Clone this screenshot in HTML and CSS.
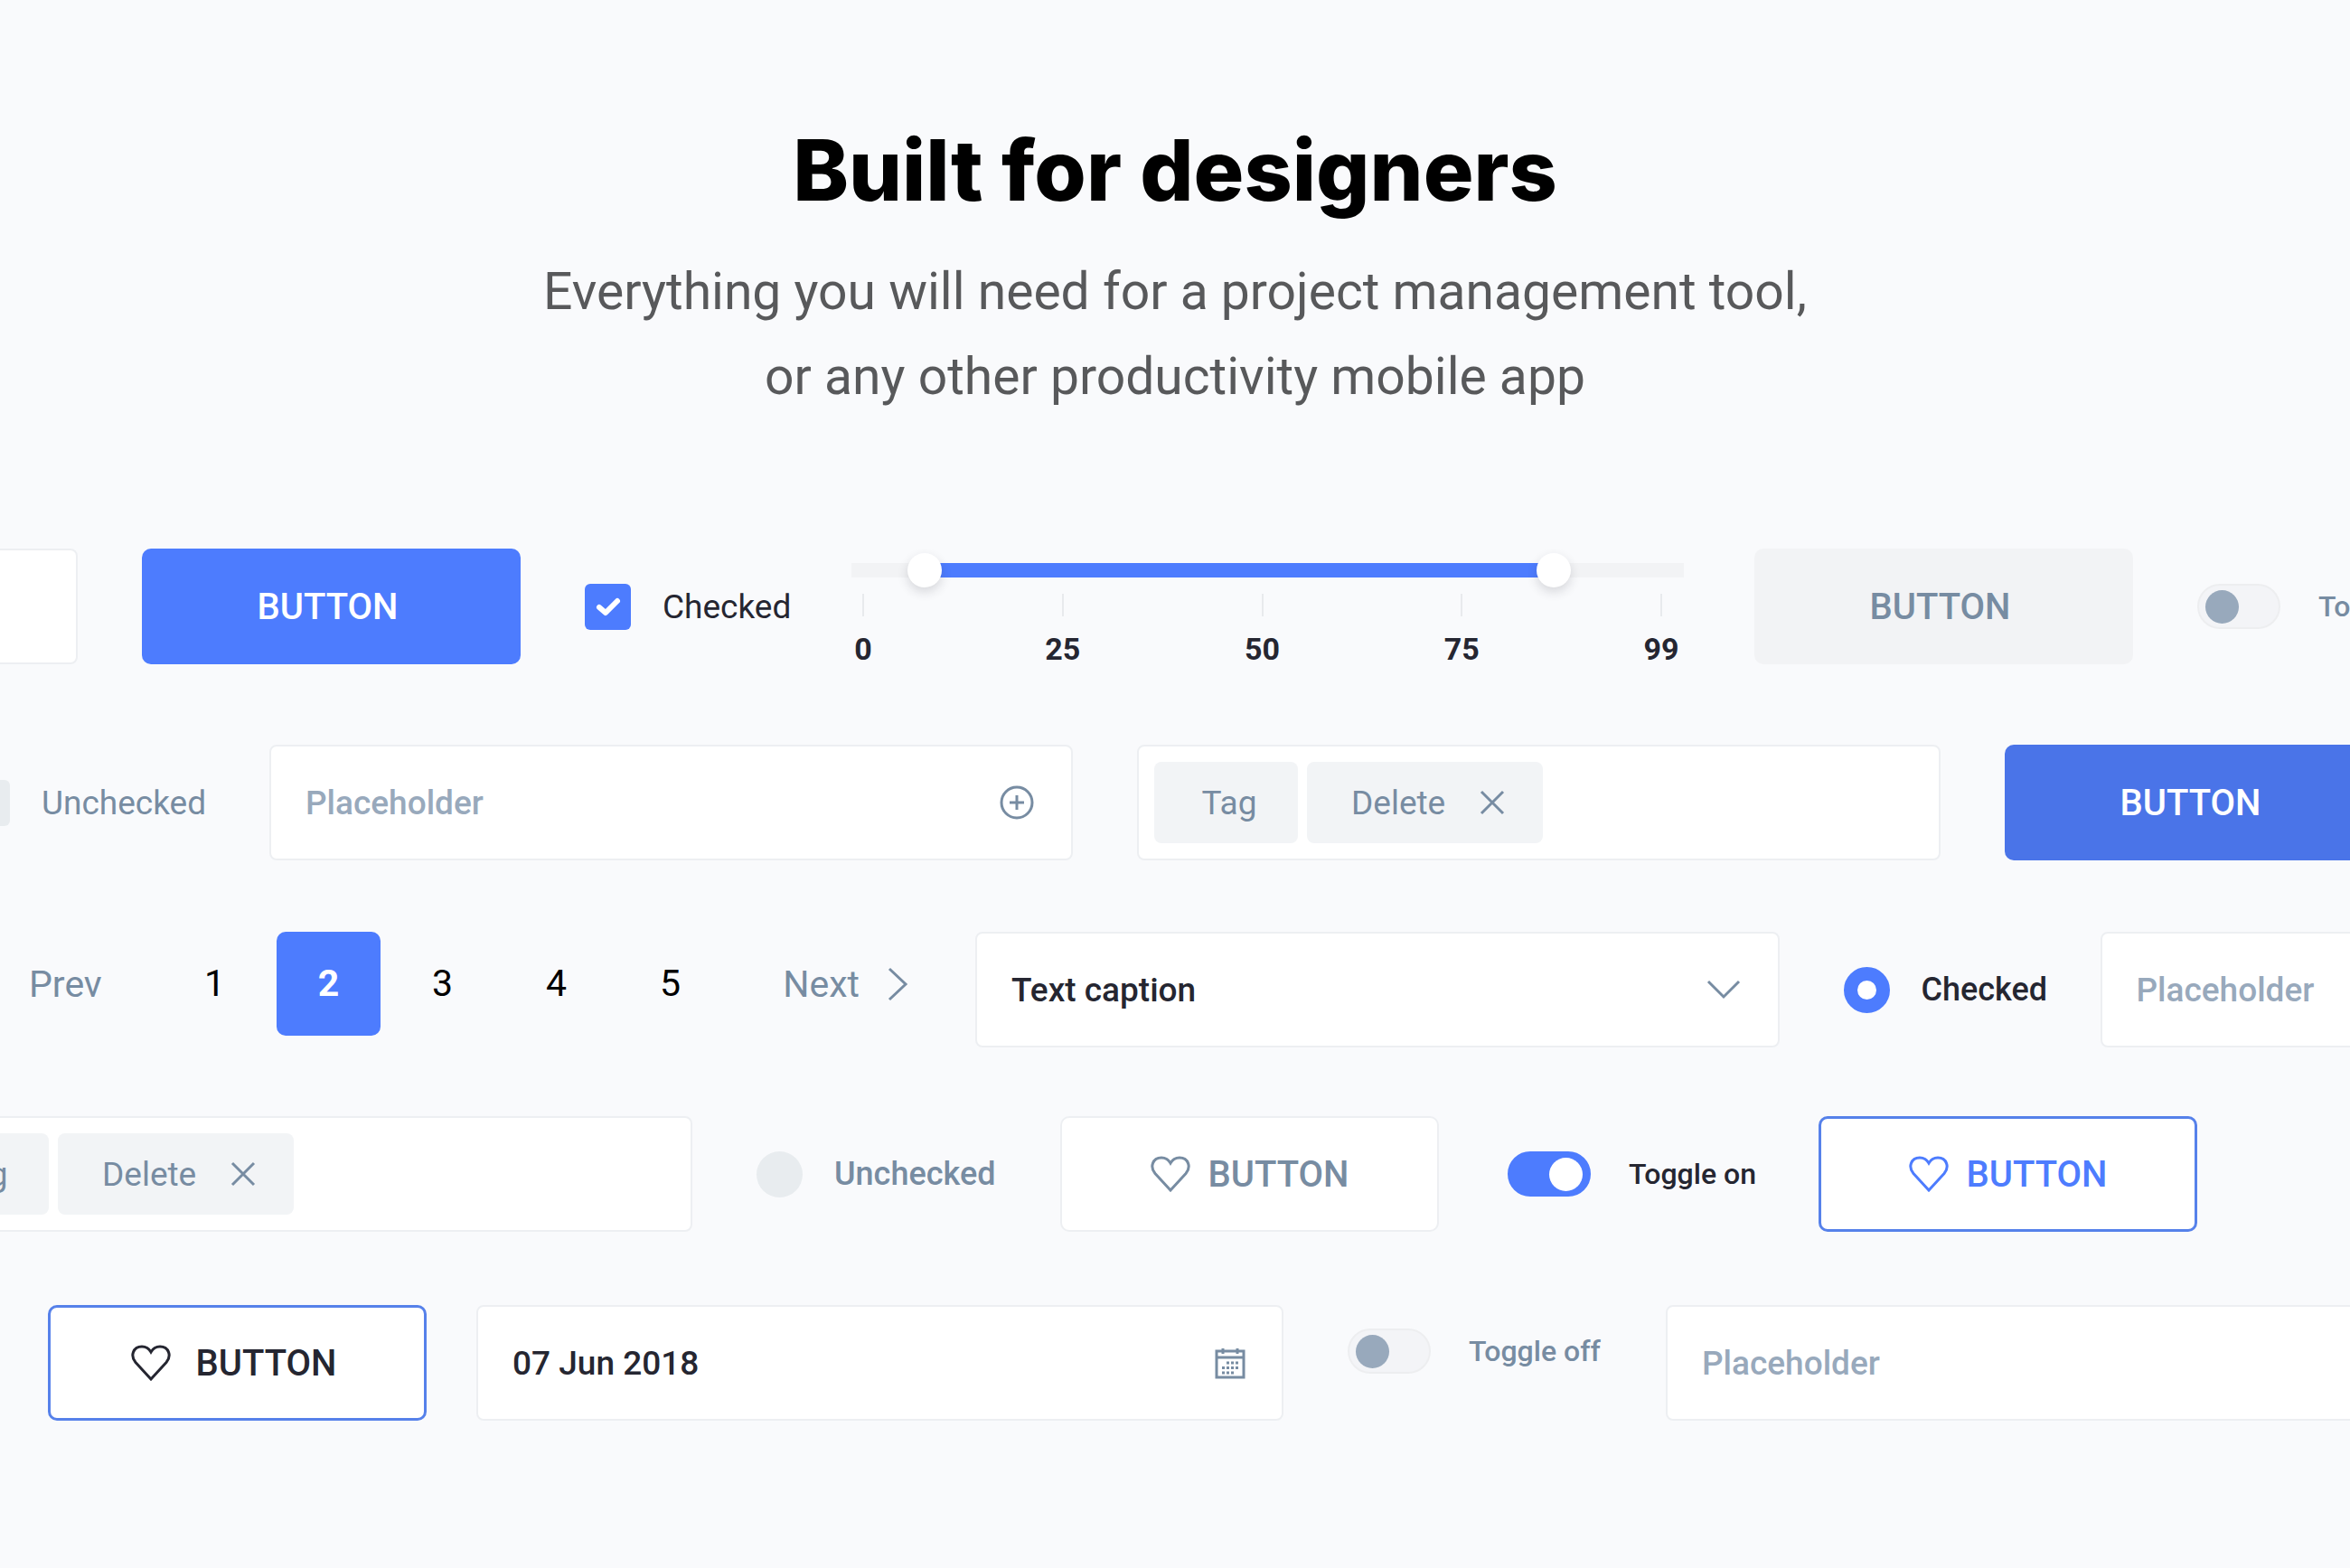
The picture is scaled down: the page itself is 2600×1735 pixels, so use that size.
FILE: index.html
```html
<!DOCTYPE html>
<html lang="en">
<head>
  <meta charset="UTF-8" />
  <meta name="viewport" content="width=device-width, initial-scale=1" />
  <title>Built for designers</title>
  <link rel="stylesheet" href="styles.css">
</head>
<body>
  <!-- Shared icons -->
  <svg class="sprite" aria-hidden="true">
    <symbol id="icon-heart" viewBox="0 0 44 40">
      <path d="M22 38 L5 19.500 C-1 12.500 2 2 12 2 C17 2 20 4.500 22 8 C24 4.500 27 2 32 2 C42 2 45 12.500 39 19.500 Z" />
    </symbol>
    <symbol id="icon-close" viewBox="0 0 28 28">
      <path d="M2 2 L26 26 M26 2 L2 26" />
    </symbol>
    <symbol id="icon-plus" viewBox="0 0 40 40">
      <circle cx="20" cy="20" r="17" />
      <path d="M20 12 V28 M12 20 H28" />
    </symbol>
    <symbol id="icon-right" viewBox="0 0 24 40">
      <path d="M3 3 L21 20 L3 37" />
    </symbol>
    <symbol id="icon-left" viewBox="0 0 24 40">
      <path d="M21 3 L3 20 L21 37" />
    </symbol>
    <symbol id="icon-down" viewBox="0 0 40 24">
      <path d="M3 3 L20 20 L37 3" />
    </symbol>
    <symbol id="icon-calendar" viewBox="0 0 34 36">
      <path d="M2 5 H32 V34 H2 Z M2 12 H32 M9 2 V8 M25 2 V8" />
      <path class="days" d="M13 18 H28 M8 23.500 H28 M8 29 H23" />
    </symbol>
  </svg>

  <header class="intro">
    <h1>Built for designers</h1>
    <p>Everything you will need for a project management tool,<br>or any other productivity mobile app</p>
  </header>

  <main class="showcase">
    <!-- Primary button, checkbox, range -->
    <section class="row row-range">
      <div class="field"><input type="text" aria-label="Empty field"></div>
      <button type="button" class="btn btn-primary">BUTTON</button>
      <label class="choice"><input type="checkbox" checked>Checked</label>
      <div class="slider">
        <div class="slider-track">
          <div class="slider-fill" style="left: 9%; right: 16%"></div>
          <input type="range" min="0" max="99" value="7" aria-label="Minimum">
          <input type="range" min="0" max="99" value="85" aria-label="Maximum">
        </div>
        <ol class="slider-scale">
          <li>0</li>
          <li>25</li>
          <li>50</li>
          <li>75</li>
          <li>99</li>
        </ol>
      </div>
      <button type="button" class="btn btn-muted">BUTTON</button>
      <label class="switch"><input type="checkbox" role="switch">Toggle off</label>
    </section>

    <!-- Inputs with icon and tags -->
    <section class="row row-inputs">
      <label class="choice"><input type="checkbox">Unchecked</label>
      <div class="field">
        <input type="text" placeholder="Placeholder" aria-label="Add item">
        <svg class="icon icon-plus"><use href="#icon-plus" /></svg>
      </div>
      <div class="field field-tags">
        <span class="tag">Tag</span>
        <button type="button" class="tag">Delete<svg class="icon icon-close"><use href="#icon-close" /></svg></button>
        <input type="text" aria-label="Add tag">
      </div>
      <button type="button" class="btn btn-pressed">BUTTON</button>
    </section>

    <!-- Pagination and select -->
    <section class="row row-pages">
      <nav class="pagination" aria-label="Pagination">
        <a href="#prev" class="step"><svg class="icon icon-step"><use href="#icon-left" /></svg>Prev</a>
        <div class="pages">
          <a href="#1">1</a>
          <a href="#2" class="current" aria-current="page">2</a>
          <a href="#3">3</a>
          <a href="#4">4</a>
          <a href="#5">5</a>
        </div>
        <a href="#next" class="step">Next<svg class="icon icon-step"><use href="#icon-right" /></svg></a>
      </nav>
      <div class="field">
        <select aria-label="Caption">
          <option>Text caption</option>
        </select>
        <svg class="icon icon-down"><use href="#icon-down" /></svg>
      </div>
      <label class="choice strong"><input type="radio" name="round" checked>Checked</label>
      <div class="field"><input type="text" placeholder="Placeholder" aria-label="Text field"></div>
    </section>

    <!-- Tags, outline buttons, toggle -->
    <section class="row row-outline">
      <div class="field field-tags">
        <span class="tag">Tag</span>
        <button type="button" class="tag">Delete<svg class="icon icon-close"><use href="#icon-close" /></svg></button>
        <input type="text" aria-label="Add tag">
      </div>
      <label class="choice strong"><input type="radio" name="other">Unchecked</label>
      <button type="button" class="btn btn-plain"><svg class="icon icon-heart"><use href="#icon-heart" /></svg>BUTTON</button>
      <label class="switch"><input type="checkbox" role="switch" checked>Toggle on</label>
      <button type="button" class="btn btn-outline"><svg class="icon icon-heart"><use href="#icon-heart" /></svg>BUTTON</button>
    </section>

    <!-- Date field -->
    <section class="row row-date">
      <button type="button" class="btn btn-outline btn-dark"><svg class="icon icon-heart"><use href="#icon-heart" /></svg>BUTTON</button>
      <div class="field">
        <input type="text" value="07 Jun 2018" aria-label="Date">
        <svg class="icon icon-calendar"><use href="#icon-calendar" /></svg>
      </div>
      <label class="switch"><input type="checkbox" role="switch">Toggle off</label>
      <div class="field"><input type="text" placeholder="Placeholder" aria-label="Notes"></div>
    </section>
  </main>
</body>
</html>
```
FILE: styles.css
```css
/* Reset and base */
* {
  box-sizing: border-box;
}

:root {
  --blue: #4d7cfe;
  --dark: #252631;
  --slate: #778ca2;
  --light-slate: #98a9bc;
  --line: #edeff2;
  --gray: #f2f3f5;
}

body {
  margin: 0;
  background: #f9fafc;
  color: var(--dark);
  font-family: Roboto, sans-serif;
  font-size: 37px;
  overflow-x: hidden;
}

button,
input,
select {
  margin: 0;
  font: inherit;
  color: inherit;
}

button {
  cursor: pointer;
}

a {
  color: inherit;
  text-decoration: none;
}

/* Icons */
.sprite {
  display: none;
}

.icon {
  flex: none;
  fill: none;
  stroke: currentColor;
  stroke-width: 3px;
}

.icon-heart {
  width: 44px;
  height: 40px;
}

.icon-close {
  width: 28px;
  height: 28px;
}

.icon-plus {
  width: 40px;
  height: 40px;
}

.icon-step {
  width: 24px;
  height: 40px;
}

.icon-down {
  width: 40px;
  height: 24px;
}

.icon-calendar {
  width: 34px;
  height: 36px;
}

.days {
  stroke-dasharray: 3 2;
}

/* Heading */
.intro {
  padding: 128px 40px 0;
  text-align: center;
}

h1 {
  margin: 0;
  color: #000;
  font-family: Inter, sans-serif;
  font-size: 93px;
  font-weight: 800;
  line-height: 120px;
}

.intro p {
  margin: 28px 0 0;
  color: #58595b;
  font-size: 57px;
  line-height: 94px;
}

/* Component rows, they run past both sides of the window */
.showcase {
  padding: 143px 0 120px;
  overflow: hidden;
}

.row {
  display: grid;
  column-gap: 71px;
  align-items: center;
  min-height: 128px;
}

.row-range {
  grid-template-columns: 1fr 419px 224px 928px 419px 279px;
  margin: 0 -110px 0 -803px;
}

.row-inputs {
  grid-template-columns: 267px 1fr 1fr 419px;
  margin: 89px -37px 0 -40px;
}

.row-pages {
  grid-template-columns: 1030px 1fr 213px 1fr;
  margin: 79px -613px 0 -22px;
}

.row-outline {
  grid-template-columns: 1fr 265px 424px 273px 419px;
  margin: 76px 169px 0 -124px;
}

.row-date {
  grid-template-columns: 403px 1fr 281px 1fr;
  margin: 81px -136px 0 53px;
}

/* Buttons */
.btn {
  display: flex;
  align-items: center;
  justify-content: center;
  gap: 20px;
  width: 419px;
  height: 128px;
  padding: 0 8px 0 0;
  border: 0;
  border-radius: 10px;
  font-size: 40px;
  font-weight: 500;
}

.btn-primary {
  background: var(--blue);
  color: #fff;
}

.btn-pressed {
  background: #4a74e8;
  color: #fff;
}

.btn-muted {
  background: var(--gray);
  color: var(--slate);
}

.btn-plain {
  padding: 0;
  border: 2px solid var(--line);
  background: #fff;
  color: var(--slate);
}

.btn-outline {
  padding: 0;
  border: 3px solid #5681ea;
  background: #fff;
  color: var(--blue);
}

.btn-dark {
  gap: 28px;
  padding: 0 8px 0 0;
  color: var(--dark);
}

/* Fields */
.field {
  display: flex;
  align-items: center;
  min-width: 0;
  height: 128px;
  padding: 0 40px 0 38px;
  border: 2px solid var(--line);
  border-radius: 8px;
  background: #fff;
  color: var(--slate);
}

.field input,
.field select {
  flex: 1;
  min-width: 0;
  height: 100%;
  padding: 0;
  border: 0;
  outline: none;
  background: transparent;
  color: var(--dark);
  font-weight: 500;
  appearance: none;
}

.field input::placeholder {
  color: var(--light-slate);
  opacity: 1;
}

.field-tags {
  gap: 10px;
  padding: 0 17px;
}

.tag {
  display: flex;
  flex: none;
  align-items: center;
  justify-content: center;
  gap: 38px;
  min-width: 159px;
  height: 90px;
  padding: 0 42px 0 49px;
  border: 0;
  border-radius: 8px;
  background: #f2f4f6;
  color: var(--slate);
}

/* Checkbox and radio */
.choice {
  display: flex;
  align-items: center;
  gap: 35px;
  white-space: nowrap;
}

.choice input {
  flex: none;
  width: 51px;
  height: 51px;
  border-radius: 6px;
  background: #e8ecef;
  appearance: none;
}

.choice input:checked {
  background: var(--blue) url("data:image/svg+xml,%3Csvg xmlns='http://www.w3.org/2000/svg' viewBox='0 0 51 51' fill='none' stroke='white' stroke-width='6' stroke-linecap='round' stroke-linejoin='round'%3E%3Cpath d='M16 26 L23 32 L36 19'/%3E%3C/svg%3E");
}

.choice input[type="radio"] {
  border-radius: 50%;
}

.choice input[type="radio"]:checked {
  border: 15px solid var(--blue);
  background: #fff;
}

.choice:has(:not(:checked)) {
  color: var(--slate);
}

.strong {
  font-size: 36px;
  font-weight: 500;
}

/* Toggle */
.switch {
  display: flex;
  align-items: center;
  gap: 42px;
  color: var(--slate);
  font-size: 32px;
  font-weight: 500;
  white-space: nowrap;
}

.switch input {
  display: flex;
  flex: none;
  align-items: center;
  width: 92px;
  height: 50px;
  padding: 0 7px;
  border: 2px solid #edeef0;
  border-radius: 25px;
  background: #f3f4f7;
  appearance: none;
}

.switch input::before {
  content: "";
  width: 37px;
  height: 37px;
  border-radius: 50%;
  background: var(--light-slate);
}

.switch input:checked {
  justify-content: flex-end;
  border-color: var(--blue);
  background: var(--blue);
}

.switch input:checked::before {
  background: #fff;
}

.switch:has(:checked) {
  color: var(--dark);
}

.row-date .switch {
  align-self: start;
  margin-top: 26px;
}

/* Range slider */
.slider {
  padding-right: 7px;
}

.slider-track {
  position: relative;
  height: 50px;
}

.slider-track::before,
.slider-fill {
  content: "";
  position: absolute;
  top: 16px;
  right: 0;
  left: 0;
  height: 16px;
  background: var(--gray);
}

.slider-fill {
  background: var(--blue);
}

.slider-track input {
  position: absolute;
  top: 0;
  left: 0;
  width: 100%;
  height: 48px;
  background: transparent;
  appearance: none;
  pointer-events: none;
}

.slider-track input::-webkit-slider-thumb {
  width: 38px;
  height: 38px;
  border-radius: 50%;
  background: #fff;
  box-shadow: 0 5px 12px rgba(37, 38, 49, 0.16);
  appearance: none;
  pointer-events: auto;
}

.slider-scale {
  display: flex;
  justify-content: space-between;
  margin: 0 6px 0 -6px;
  padding: 0;
  font-size: 34px;
  font-weight: 700;
  line-height: 33px;
  list-style: none;
}

.slider-scale li {
  display: flex;
  flex-direction: column;
  align-items: center;
  gap: 20px;
  width: 38px;
}

.slider-scale li::before {
  content: "";
  width: 2px;
  height: 25px;
  background: #e8eaed;
}

/* Pagination */
.pagination {
  display: flex;
  align-self: start;
  align-items: center;
  justify-content: space-between;
  padding-right: 3px;
  font-size: 41px;
}

.pages {
  display: flex;
  gap: 11px;
  color: #000;
}

.pages a {
  width: 115px;
  border-radius: 10px;
  line-height: 115px;
  text-align: center;
}

.pages .current {
  background: var(--blue);
  color: #fff;
  font-weight: 700;
}

.step {
  display: flex;
  align-items: center;
  gap: 30px;
  color: var(--slate);
}
```
